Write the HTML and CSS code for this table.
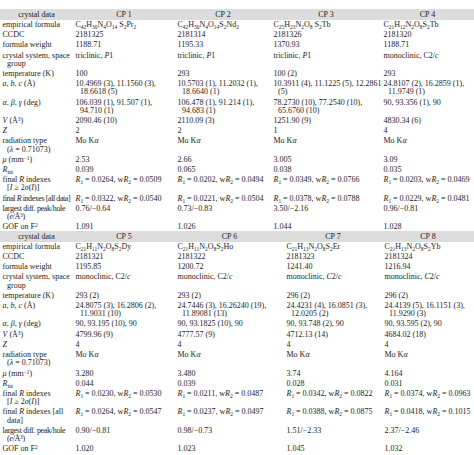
FILE: index.html
```html
<!DOCTYPE html>
<html>
<head>
<meta charset="utf-8">
<link rel="stylesheet" href="styles.css">
</head>
<body>
<div class="page">
<table class="tbl top">
<colgroup><col class="c0"><col class="c1"><col class="c2"><col class="c3"><col class="c4"></colgroup>
<tr class="head"><th>crystal data</th><th>CP 1</th><th>CP 2</th><th>CP 3</th><th>CP 4</th></tr>
<tr><td>empirical formula</td><td>C<sub>42</sub>H<sub>30</sub>N<sub>4</sub>O<sub>14</sub> S<sub>2</sub>Pr<sub>2</sub></td><td>C<sub>42</sub>H<sub>30</sub>N<sub>4</sub>O<sub>14</sub>S<sub>2</sub>Nd<sub>2</sub></td><td>C<sub>25</sub>H<sub>23</sub>N<sub>2</sub>O<sub>8</sub> S<sub>2</sub>Tb</td><td>C<sub>21</sub>H<sub>12</sub>N<sub>2</sub>O<sub>8</sub>S<sub>2</sub>Tb</td></tr>
<tr><td>CCDC</td><td>2181325</td><td>2181314</td><td>2181326</td><td>2181320</td></tr>
<tr><td>formula weight</td><td>1188.71</td><td>1195.33</td><td>1370.93</td><td>1188.71</td></tr>
<tr><td>crystal system, space<br>group</td><td>triclinic, <i>P</i><span class="bar">1</span></td><td>triclinic, <i>P</i><span class="bar">1</span></td><td>triclinic, <i>P</i><span class="bar">1</span></td><td>monoclinic, C2/<i>c</i></td></tr>
<tr><td>temperature (K)</td><td>100</td><td>293</td><td>100 (2)</td><td>293</td></tr>
<tr><td><i>a</i>, <i>b</i>, <i>c</i> (Å)</td><td>10.4969 (3), 11.1560 (3),<br>18.6618 (5)</td><td>10.5703 (1), 11.2032 (1),<br>18.6640 (1)</td><td>10.3911 (4), 11.1225 (5), 12.2861<br>(5)</td><td>24.8107 (2), 16.2859 (1),<br>11.9749 (1)</td></tr>
<tr><td><i>α</i>, <i>β</i>, <i>γ</i> (deg)</td><td>106.039 (1), 91.507 (1),<br>94.710 (1)</td><td>106.478 (1), 91.214 (1),<br>94.683 (1)</td><td>78.2730 (10), 77.2540 (10),<br>65.6760 (10)</td><td>90, 93.356 (1), 90</td></tr>
<tr><td><i>V</i> (Å<sup>3</sup>)</td><td>2090.46 (10)</td><td>2110.09 (3)</td><td>1251.90 (9)</td><td>4830.34 (6)</td></tr>
<tr><td><i>Z</i></td><td>2</td><td>2</td><td>1</td><td>4</td></tr>
<tr><td>radiation type<br>(<i>λ</i> = 0.71073)</td><td>Mo K<i>α</i></td><td>Mo K<i>α</i></td><td>Mo K<i>α</i></td><td>Mo K<i>α</i></td></tr>
<tr><td><i>μ</i> (mm<sup>−1</sup>)</td><td>2.53</td><td>2.66</td><td>3.005</td><td>3.09</td></tr>
<tr><td><i>R</i><sub>int</sub></td><td>0.039</td><td>0.065</td><td>0.038</td><td>0.035</td></tr>
<tr><td>final <i>R</i> indexes<br>[<i>I</i> ≥ 2<i>σ</i>(<i>I</i>)]</td><td><i>R</i><sub>1</sub> = 0.0264, w<i>R</i><sub>2</sub> = 0.0509</td><td><i>R</i><sub>1</sub> = 0.0202, w<i>R</i><sub>2</sub> = 0.0494</td><td><i>R</i><sub>1</sub> = 0.0349, w<i>R</i><sub>2</sub> = 0.0766</td><td><i>R</i><sub>1</sub> = 0.0203, w<i>R</i><sub>2</sub> = 0.0469</td></tr>
<tr><td class="tight2">final <i>R</i> indexes [all data]</td><td><i>R</i><sub>1</sub> = 0.0322, w<i>R</i><sub>2</sub> = 0.0540</td><td><i>R</i><sub>1</sub> = 0.0221, w<i>R</i><sub>2</sub> = 0.0504</td><td><i>R</i><sub>1</sub> = 0.0378, w<i>R</i><sub>2</sub> = 0.0788</td><td><i>R</i><sub>1</sub> = 0.0229, w<i>R</i><sub>2</sub> = 0.0481</td></tr>
<tr><td class="tight">largest diff. peak/hole<br>(<i>e</i>/Å<sup>3</sup>)</td><td>0.76/−0.64</td><td>0.73/−0.83</td><td>3.50/−2.16</td><td>0.96/−0.81</td></tr>
<tr class="last"><td>GOF on F<sup>2</sup></td><td>1.091</td><td>1.026</td><td>1.044</td><td>1.028</td></tr>
</table>
<table class="tbl bottom">
<colgroup><col class="c0"><col class="c1"><col class="d2"><col class="d3"><col class="d4"></colgroup>
<tr class="head"><th>crystal data</th><th>CP 5</th><th>CP 6</th><th>CP 7</th><th>CP 8</th></tr>
<tr><td>empirical formula</td><td>C<sub>21</sub>H<sub>11</sub>N<sub>2</sub>O<sub>8</sub>S<sub>2</sub>Dy</td><td>C<sub>21</sub>H<sub>11</sub>N<sub>2</sub>O<sub>8</sub>S<sub>2</sub>Ho</td><td>C<sub>21</sub>H<sub>13</sub>N<sub>2</sub>O<sub>8</sub>S<sub>2</sub>Er</td><td>C<sub>21</sub>H<sub>13</sub>N<sub>2</sub>O<sub>8</sub>S<sub>2</sub>Yb</td></tr>
<tr><td>CCDC</td><td>2181321</td><td>2181322</td><td>2181323</td><td>2181324</td></tr>
<tr><td>formula weight</td><td>1195.85</td><td>1200.72</td><td>1241.40</td><td>1216.94</td></tr>
<tr><td>crystal system, space<br>group</td><td>monoclinic, C2/<i>c</i></td><td>monoclinic, C2/<i>c</i></td><td>monoclinic, <i>C</i>2/<i>c</i></td><td>monoclinic, <i>C</i>2/<i>c</i></td></tr>
<tr><td>temperature (K)</td><td>293 (2)</td><td>293 (2)</td><td>296 (2)</td><td>296 (2)</td></tr>
<tr><td><i>a</i>, <i>b</i>, <i>c</i> (Å)</td><td>24.8075 (3), 16.2806 (2),<br>11.9031 (10)</td><td>24.7446 (3), 16.26240 (19),<br>11.89081 (13)</td><td>24.4231 (4), 16.0851 (3),<br>12.0205 (2)</td><td>24.4139 (5), 16.1151 (3),<br>11.9290 (3)</td></tr>
<tr><td><i>α</i>, <i>β</i>, <i>γ</i> (deg)</td><td>90, 93.195 (10), 90</td><td>90, 93.1825 (10), 90</td><td>90, 93.748 (2), 90</td><td>90, 93.595 (2), 90</td></tr>
<tr><td><i>V</i> (Å<sup>3</sup>)</td><td>4799.96 (9)</td><td>4777.57 (9)</td><td>4712.13 (14)</td><td>4684.02 (18)</td></tr>
<tr><td><i>Z</i></td><td>4</td><td>4</td><td>4</td><td>4</td></tr>
<tr><td>radiation type<br>(<i>λ</i> = 0.71073)</td><td>Mo K<i>α</i></td><td>Mo K<i>α</i></td><td>Mo K<i>α</i></td><td>Mo K<i>α</i></td></tr>
<tr><td><i>μ</i> (mm<sup>−1</sup>)</td><td>3.280</td><td>3.480</td><td>3.74</td><td>4.164</td></tr>
<tr><td><i>R</i><sub>int</sub></td><td>0.044</td><td>0.039</td><td>0.028</td><td>0.031</td></tr>
<tr><td>final <i>R</i> indexes<br>[<i>I</i> ≥ 2<i>σ</i>(<i>I</i>)]</td><td><i>R</i><sub>1</sub> = 0.0230, w<i>R</i><sub>2</sub> = 0.0530</td><td><i>R</i><sub>1</sub> = 0.0211, w<i>R</i><sub>2</sub> = 0.0487</td><td><i>R</i><sub>1</sub> = 0.0342, w<i>R</i><sub>2</sub> = 0.0822</td><td><i>R</i><sub>1</sub> = 0.0374, w<i>R</i><sub>2</sub> = 0.0963</td></tr>
<tr><td>final <i>R</i> indexes [all<br>data]</td><td><i>R</i><sub>1</sub> = 0.0264, w<i>R</i><sub>2</sub> = 0.0547</td><td><i>R</i><sub>1</sub> = 0.0237, w<i>R</i><sub>2</sub> = 0.0497</td><td><i>R</i><sub>1</sub> = 0.0388, w<i>R</i><sub>2</sub> = 0.0875</td><td><i>R</i><sub>1</sub> = 0.0418, w<i>R</i><sub>2</sub> = 0.1015</td></tr>
<tr><td class="tight">largest diff. peak/hole<br>(<i>e</i>/Å<sup>3</sup>)</td><td>0.90/−0.81</td><td>0.98/−0.73</td><td>1.51/−2.33</td><td>2.37/−2.46</td></tr>
<tr class="last"><td>GOF on F<sup>2</sup></td><td>1.020</td><td>1.023</td><td>1.045</td><td>1.032</td></tr>
</table>
</div>
</body>
</html>
```
FILE: styles.css
```css
html, body {
  margin: 0;
  padding: 0;
  background: #ffffff;
}
body {
  font-family: "Liberation Serif", "DejaVu Serif", serif;
  font-size: 8px;
  color: #1c1c1c;
}
.page {
  padding-top: 9px;
  width: 474px;
  overflow: hidden;
}
.tbl {
  border-collapse: collapse;
  table-layout: fixed;
  width: 474px;
}
.c0 { width: 73px; }
.c1 { width: 102px; }
.c2 { width: 96px; }
.c3 { width: 110px; }
.c4 { width: 93px; }
.d2 { width: 109px; }
.d3 { width: 98px; }
.d4 { width: 92px; }
.head th {
  background: #dcdcdc;
  font-weight: normal;
  height: 11px;
  line-height: 11px;
  padding: 0;
  text-align: center;
  white-space: nowrap;
}
.tbl td {
  vertical-align: top;
  padding: 1px 0 1px 7px;
  text-indent: -4.5px;
  line-height: 8.2px;
  white-space: nowrap;
  overflow: hidden;
}
.tbl td.tight {
  letter-spacing: -0.3px;
}
.tbl td.tight2 {
  letter-spacing: -0.42px;
}
.tbl .last td {
  padding-bottom: 0;
  line-height: 7.6px;
}
sub {
  font-size: 68%;
  line-height: 0;
  vertical-align: -1.5px;
}
sup {
  font-size: 68%;
  line-height: 0;
  vertical-align: 2.5px;
}
.bar {
  text-decoration: overline;
}
```
